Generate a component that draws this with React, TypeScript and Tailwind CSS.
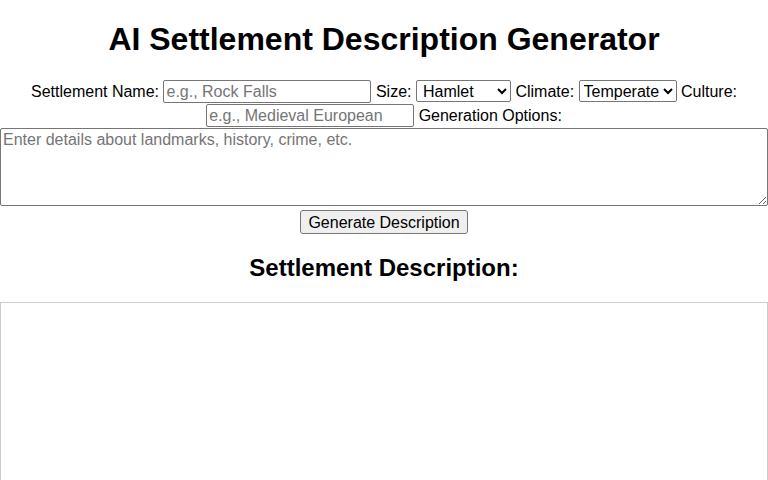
import { useState } from "react";

export default function App() {
  const [name, setName] = useState("");
  const [size, setSize] = useState("Hamlet");
  const [climate, setClimate] = useState("Temperate");
  const [culture, setCulture] = useState("");
  const [options, setOptions] = useState("");

  const field =
    "border border-[#767676] rounded-[2px] bg-white px-[2px] py-[1px] text-base leading-[normal] text-black placeholder:text-[#757575] align-baseline";

  return (
    <div className="min-h-screen bg-white text-black text-center font-['Liberation_Sans',Arial,sans-serif] text-base">
      <h1 className="text-[32px] font-bold leading-[normal] pt-[20.5px] pb-[22.4px]">
        AI Settlement Description Generator
      </h1>

      <div>
        <label>Settlement Name: </label>
        <input
          type="text"
          value={name}
          onChange={(e) => setName(e.target.value)}
          placeholder="e.g., Rock Falls"
          className={`${field} w-[208px] h-[23px]`}
        />{" "}
        <label>Size: </label>
        <select
          value={size}
          onChange={(e) => setSize(e.target.value)}
          className={`${field} w-[95px] h-[22px] px-0`}
        >
          <option>Hamlet</option>
          <option>Village</option>
          <option>Town</option>
          <option>City</option>
        </select>{" "}
        <label>Climate: </label>
        <select
          value={climate}
          onChange={(e) => setClimate(e.target.value)}
          className={`${field} w-[98px] h-[22px] pl-0 pr-0`}
        >
          <option>Temperate</option>
          <option>Arid</option>
          <option>Tropical</option>
          <option>Arctic</option>
        </select>{" "}
        <label>Culture: </label>
        <input
          type="text"
          value={culture}
          onChange={(e) => setCulture(e.target.value)}
          placeholder="e.g., Medieval European"
          className={`${field} w-[208px] h-[23px]`}
        />{" "}
        <label>Generation Options:</label>
        <textarea
          value={options}
          onChange={(e) => setOptions(e.target.value)}
          placeholder="Enter details about landmarks, history, crime, etc."
          className={`${field} block w-full h-[78px] text-left py-[2px]`}
        />
        <div className="pt-[4px]">
          <button className="bg-[#efefef] border border-[#767676] rounded-[3px] px-[7px] h-[24px] text-base text-black">
            Generate Description
          </button>
        </div>
      </div>

      <h2 className="text-2xl font-bold leading-[normal] mt-[19px] mb-[20px]">
        Settlement Description:
      </h2>
      <div className="border border-[#cccccc] h-[300px] text-left"></div>
    </div>
  );
}
